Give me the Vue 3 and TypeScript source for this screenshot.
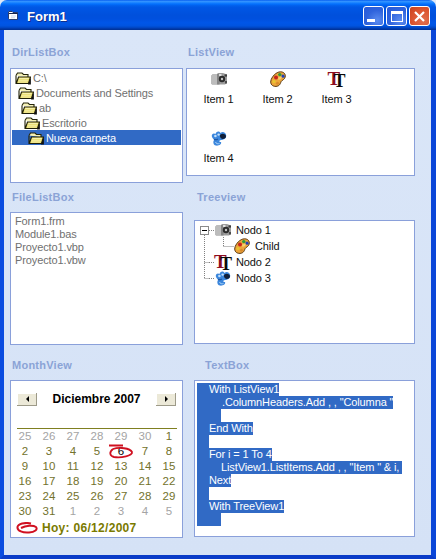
<script setup lang="ts">
interface Dir { name: string; indent: number; selected?: boolean }
interface Item { name: string; icon: string }
interface Day { n: number; out: boolean; today: boolean }

const dirs: Dir[] = [
  { name: 'C:\\', indent: 3 },
  { name: 'Documents and Settings', indent: 6 },
  { name: 'ab', indent: 9 },
  { name: 'Escritorio', indent: 12 },
  { name: 'Nueva carpeta', indent: 16, selected: true },
]
const files = ['Form1.frm', 'Module1.bas', 'Proyecto1.vbp', 'Proyecto1.vbw']
const items: Item[] = [
  { name: 'Item 1', icon: 'camera' },
  { name: 'Item 2', icon: 'palette' },
  { name: 'Item 3', icon: 'tt' },
  { name: 'Item 4', icon: 'paw' },
]
const nodes = [
  { name: 'Nodo 1', icon: 'camera', child: false },
  { name: 'Child', icon: 'palette', child: true },
  { name: 'Nodo 2', icon: 'tt', child: false },
  { name: 'Nodo 3', icon: 'paw', child: false },
]
const seq: [number, boolean][] = [
  [25, true], [26, true], [27, true], [28, true], [29, true], [30, true],
]
const days: Day[] = seq.map(([n, out]) => ({ n, out, today: false }))
for (let n = 1; n <= 31; n++) days.push({ n, out: false, today: n === 6 })
for (let n = 1; n <= 5; n++) days.push({ n, out: true, today: false })

const code = [
  { t: 'With ListView1', pad: 12 },
  { t: '.ColumnHeaders.Add , , "Columna "', pad: 25 },
  { t: '', pad: 24 },
  { t: 'End With', pad: 12 },
  { t: '', pad: 12 },
  { t: 'For i = 1 To 4', pad: 12 },
  { t: 'ListView1.ListItems.Add , , "Item " & i, i', pad: 24 },
  { t: 'Next', pad: 12 },
  { t: '', pad: 12 },
  { t: 'With TreeView1', pad: 12 },
  { t: '', pad: 24 },
]
</script>

<template>
  <svg class="defs" width="0" height="0" aria-hidden="true">
    <symbol id="ic-folder" viewBox="0 0 16 14">
      <path d="M1 4.5 L2.5 2 H7 L8.5 3.5 H13 V6" fill="#f6f2b8" stroke="#26260c" stroke-width="1.1" />
      <path d="M1 4.5 V12.5 H13.5 L15.5 6 H3.5 L1.5 12" fill="#e6d860" stroke="#1e1e08" stroke-width="1.1" />
      <path d="M4.2 7.4 H13.8 M3.6 9.2 H13.2 M3.1 11 H12.7" stroke="#fbf6c0" stroke-width="0.9" />
      <path d="M13 13.4 L15.9 6 V13.4 Z" fill="#111" />
    </symbol>
    <symbol id="ic-camera" viewBox="0 0 16 16">
      <path d="M0 5 L2 3 H6 L7 2 H12 L16 3.5 V12 L14 13.5 H1 L0 12 Z" fill="#9c9c9c" />
      <path d="M0 5 L2 3 H6 V13.5 H1 L0 12 Z" fill="#bcbcbc" />
      <path d="M6 3 H8.5 V13.5 H6 Z" fill="#858585" />
      <circle cx="11" cy="8" r="3.2" fill="#2c2c2c" />
      <circle cx="11" cy="8" r="1.2" fill="#c4c4c4" />
      <rect x="13.5" y="3.4" width="2.5" height="2.2" fill="#3c3c3c" />
      <rect x="8" y="3.2" width="2.5" height="1.6" fill="#f0f0f0" />
      <rect x="14" y="10" width="2" height="2.5" fill="#4c4c4c" />
    </symbol>
    <symbol id="ic-palette" viewBox="0 0 16 16">
      <path d="M10.5 0.8 C13.8 0.8 15.8 3 15.2 6 C14.7 8.5 12.2 9 11.2 10.5 C10.4 12 10 15.2 6 15.4 C2.3 15.6 0.2 13 0.8 10 C1.5 6 6 0.8 10.5 0.8 Z" fill="#eda63c" stroke="#4a2a08" stroke-width="0.9" />
      <circle cx="6" cy="6.5" r="2" fill="#c8241c" />
      <circle cx="9.8" cy="3.6" r="1.7" fill="#2f9a3a" />
      <circle cx="13" cy="5.2" r="1.6" fill="#2240b8" />
      <circle cx="4" cy="10.5" r="1.6" fill="#e8c830" />
      <path d="M8 6.5 L12 5.5 L11 8 L8.5 9 Z" fill="#f6d070" />
      <circle cx="7.5" cy="12.3" r="1.5" fill="#d88a2c" />
    </symbol>
    <symbol id="ic-paw" viewBox="0 0 16 16">
      <path d="M1 7 C0 4.5 2.5 2.5 4.5 4 C5 1.5 8 0.5 9.5 3 C11.5 1 15 2.5 15.2 5.5 C15.5 8.5 12.5 10 10 10 C8 10.3 7.5 12 10 12 C11 14 8 16 5 15.6 C2 15 1.8 11.5 3.2 9.8 C2.2 9 1.5 8 1 7 Z" fill="#3b86dc" />
      <circle cx="4.4" cy="6" r="1.3" fill="#c2dffa" />
      <circle cx="7.6" cy="4.6" r="1.2" fill="#c2dffa" />
      <path d="M9.5 4.5 C11.5 3 15 4 15 6.5 C15 8.8 11.5 9.5 10 8.3 C8.8 7.2 8.6 5.2 9.5 4.5 Z" fill="#101f3a" />
      <path d="M4.5 12 C5 13.8 7 14.2 8.5 13.4" fill="none" stroke="#a6d0f6" stroke-width="1" />
      <path d="M3 9.2 C4.5 10.2 5.5 9.6 7 9" fill="none" stroke="#1c56a4" stroke-width="1.1" />
    </symbol>
  </svg>

  <div class="window">
    <header class="titlebar">
      <svg class="app-icon" viewBox="0 0 10 9" width="10" height="9">
        <path d="M0.5 1 L1 0.5 H4 L5 1.5 H9.5 V8.5 H1.5 L0.5 7.5 Z" fill="#fff" stroke="#16234e" stroke-width="0.8" />
        <path d="M1 2.5 H9.5" stroke="#16234e" stroke-width="1.2" />
        <path d="M3 5 H8 M3 6.8 H7" stroke="#c7d3ea" stroke-width="0.9" />
      </svg>
      <span class="title">Form1</span>
      <div class="controls">
        <button class="ctl">
          <span class="min-glyph"></span>
        </button>
        <button class="ctl">
          <span class="max-glyph"></span>
        </button>
        <button class="ctl close">
          <svg viewBox="0 0 13 13" width="13" height="13">
            <path d="M2 2 L11 11 M11 2 L2 11" stroke="#fff" stroke-width="2.2" />
          </svg>
        </button>
      </div>
    </header>

    <main class="client">
      <section class="row row-1">
        <div class="panel left">
          <div class="label">DirListBox</div>
          <div class="box dir">
            <div
              v-for="d in dirs"
              :key="d.name"
              class="dir-row"
              :class="{ selected: d.selected }"
              :style="{ paddingLeft: d.indent + 'px' }"
            >
              <svg class="folder" width="16" height="14"><use href="#ic-folder" /></svg>
              <span>{{ d.name }}</span>
            </div>
          </div>
        </div>
        <div class="panel right-a">
          <div class="label">ListView</div>
          <div class="box listview">
            <div v-for="it in items" :key="it.name" class="lv-item">
              <span v-if="it.icon === 'tt'" class="tt"><i class="t1">T</i><i class="t2">T</i></span>
              <svg v-else class="ic" width="16" height="16"><use :href="'#ic-' + it.icon" /></svg>
              <span class="lv-text">{{ it.name }}</span>
            </div>
          </div>
        </div>
      </section>

      <section class="row row-2">
        <div class="panel left">
          <div class="label">FileListBox</div>
          <div class="box files">
            <div v-for="f in files" :key="f" class="file">{{ f }}</div>
          </div>
        </div>
        <div class="panel right-b">
          <div class="label tree-label">Treeview</div>
          <div class="box tree">
            <svg class="connectors" width="60" height="70">
              <path d="M9.5 14 V57.5 M14 9.5 H20 M14 41.5 H20 M14 57.5 H20 M9.5 41.5 H14 M9.5 57.5 H14 M28.5 16 V25.5 M28.5 25.5 H39" fill="none" stroke="#808080" stroke-width="1" stroke-dasharray="1 1" />
            </svg>
            <span class="expander"></span>
            <div v-for="n in nodes" :key="n.name" class="node" :class="{ child: n.child }">
              <span v-if="n.icon === 'tt'" class="tt"><i class="t1">T</i><i class="t2">T</i></span>
              <svg v-else class="ic" width="16" height="16"><use :href="'#ic-' + n.icon" /></svg>
              <span class="node-text">{{ n.name }}</span>
            </div>
          </div>
        </div>
      </section>

      <section class="row row-3">
        <div class="panel left">
          <div class="label">MonthView</div>
          <div class="box month">
            <div class="nav">
              <button class="navbtn"><span class="arrow-l"></span></button>
              <span class="month-title">Diciembre 2007</span>
              <button class="navbtn"><span class="arrow-r"></span></button>
            </div>
            <div class="rule"></div>
            <div class="days">
              <span
                v-for="(d, i) in days"
                :key="i"
                class="day"
                :class="{ out: d.out, today: d.today }"
              >
                {{ d.n }}
                <svg v-if="d.today" class="ring" viewBox="0 0 26 16" width="26" height="16">
                  <path d="M1 1.5 H15 M5 5 C11 3 22 4 24 8 C25 12 13 14 6 13 C1.5 12 1 8 5 5" fill="none" stroke="#d01020" stroke-width="1.8" />
                </svg>
              </span>
            </div>
            <div class="hoy">
              <svg viewBox="0 0 22 12" width="22" height="12">
                <path d="M15 1.5 C9 0 2 2 1.5 5 C1 9 7 11 13 10.5 C19 10 22 7.5 20 5 C17 3 10 3.5 5 6" fill="none" stroke="#d01020" stroke-width="2" />
              </svg>
              <span>Hoy: 06/12/2007</span>
            </div>
          </div>
        </div>
        <div class="panel right-b">
          <div class="label text-label">TextBox</div>
          <div class="box textbox">
            <div v-for="(l, i) in code" :key="i" class="code-line" :style="{ paddingLeft: l.pad + 'px' }">{{ l.t }}</div>
          </div>
        </div>
      </section>
    </main>
  </div>
</template>

<style>
html, body { margin: 0; background: #dfe8f8; }
</style>

<style scoped>
.defs { position: absolute; }
.window {
  width: 436px;
  height: 559px;
  display: flex;
  flex-direction: column;
  font-family: "Liberation Sans", Arial, sans-serif;
  font-size: 11px;
  letter-spacing: -0.12px;
  border-radius: 7px 7px 0 0;
  overflow: hidden;
}
.titlebar {
  height: 30px;
  flex: none;
  display: flex;
  align-items: center;
  padding: 2px 6px 0 8px;
  box-sizing: border-box;
  background: linear-gradient(180deg, #0058ee 0%, #3593ff 4%, #288eff 7%, #127dff 10%, #036ffc 14%, #0262ee 18%, #0057e5 24%, #0050dc 50%, #0050de 62%, #0056e8 76%, #0054e0 86%, #0046c4 92%, #0038a8 96%, #003092 100%);
}
.app-icon { flex: none; margin-top: -1px; }
.title {
  margin-left: 9px;
  margin-top: 1px;
  color: #fff;
  font-weight: 700;
  font-size: 13px;
  letter-spacing: 0;
  text-shadow: 1px 1px 0 #0f2f8c;
}
.controls { margin-left: auto; display: flex; gap: 2px; }
.ctl {
  width: 21px;
  height: 20px;
  padding: 0;
  border: 1px solid #fff;
  border-radius: 3px;
  box-sizing: border-box;
  position: relative;
  display: flex;
  align-items: center;
  justify-content: center;
  background: radial-gradient(circle at 70% 75%, #5b8cf0 0%, #2f63dc 55%, #2558d8 100%);
}
.ctl.close { background: radial-gradient(circle at 70% 75%, #e07050 0%, #dc5530 55%, #c8401c 100%); }
.min-glyph { width: 8px; height: 3px; background: #fff; margin: 8px 6px 0 0; }
.max-glyph { width: 12px; height: 11px; box-sizing: border-box; border: 1px solid #fff; border-top-width: 3px; }

.client {
  flex: 1;
  min-height: 0;
  background: linear-gradient(180deg, #dae6f8, #d5e2f6);
  border-left: 4px solid #0a4ce0;
  border-right: 5px solid #0a46d8;
  border-bottom: 4px solid #0a3cc8;
  padding-top: 14px;
}
.row { display: flex; align-items: flex-start; }
.row-2 { margin-top: 6px; }
.row-3 { margin-top: 12px; }
.panel.left { margin-left: 6px; width: 173px; flex: none; }
.right-a { margin-left: 3px; width: 229px; flex: none; }
.right-b { margin-left: 11px; width: 221px; flex: none; }
.label {
  height: 16px;
  line-height: 16px;
  margin-bottom: 8px;
  padding-left: 2px;
  color: #8ba3d6;
  font-weight: 700;
  font-size: 11px;
  letter-spacing: 0.25px;
}
.row-2 .label, .row-3 .label { margin-bottom: 7px; }
.row-2 .tree-label { margin-bottom: 15px; padding-left: 3px; }
.row-3 .text-label { padding-left: 11px; }
.box {
  box-sizing: border-box;
  border: 1px solid #8aa0da;
  background: #fff;
  position: relative;
  overflow: hidden;
}
.dir { height: 115px; padding: 1px 1px 0; color: #707070; }
.dir-row {
  height: 15px;
  display: flex;
  align-items: center;
  white-space: nowrap;
}
.dir-row.selected { background: #316ac5; color: #fff; }
.folder { flex: none; margin-right: 2px; }
.listview {
  height: 108px;
  padding: 2px 0 0 2px;
  display: grid;
  grid-template-columns: repeat(auto-fill, 59px);
  grid-auto-rows: 59px;
  align-content: start;
  color: #111;
}
.lv-item {
  display: flex;
  flex-direction: column;
  align-items: center;
}
.lv-text { margin-top: 5px; line-height: 14px; }
.ic { display: block; flex: none; width: 16px; height: 16px; }
.tt {
  position: relative;
  display: block;
  flex: none;
  width: 16px;
  height: 16px;
  font-family: "Liberation Serif", serif;
  font-weight: 700;
  line-height: 16px;
  letter-spacing: 0;
}
.tt i { position: absolute; font-style: normal; }
.t1 { left: -1px; top: 0; color: #8c0c20; font-size: 19px; }
.t2 { left: 5px; top: 2px; color: #0a0a0a; font-size: 18px; }

.files { height: 133px; padding: 2px 4px; color: #707070; }
.file { height: 13px; line-height: 13px; white-space: nowrap; }

.tree { height: 124px; padding-top: 1px; color: #111; }
.connectors { position: absolute; left: 0; top: 0; }
.expander {
  position: absolute;
  left: 5px;
  top: 5px;
  width: 9px;
  height: 9px;
  box-sizing: border-box;
  border: 1px solid #8a8a8a;
  background: linear-gradient(#000, #000) center / 5px 1px no-repeat, #fff;
}
.node {
  position: relative;
  height: 16px;
  display: flex;
  align-items: center;
  padding-left: 20px;
  white-space: nowrap;
}
.node.child { padding-left: 39px; }
.node-text { margin-left: 5px; }

.month { height: 158px; color: #72722c; }
.nav {
  display: flex;
  align-items: center;
  justify-content: space-between;
  margin: 11px 6px 0;
}
.navbtn {
  width: 20px;
  height: 13px;
  padding: 0;
  border: 0;
  background: #ece9d8;
  box-shadow: inset -1px -1px 0 #9d9a88, inset 1px 1px 0 #fff;
  display: flex;
  align-items: center;
  justify-content: center;
}
.arrow-l, .arrow-r { width: 0; height: 0; border: 3px solid transparent; }
.arrow-l { border-right: 3px solid #000; border-left: 0; }
.arrow-r { border-left: 3px solid #000; border-right: 0; }
.month-title { color: #000; font-weight: 700; font-size: 12px; letter-spacing: 0; }
.rule { height: 1px; background: #7f7f20; margin: 22px 5px 0 6px; }
.days {
  display: grid;
  grid-template-columns: repeat(7, 24px);
  grid-auto-rows: 15px;
  margin: 0 0 0 2px;
}
.day {
  position: relative;
  text-align: center;
  line-height: 15px;
  font-size: 11.5px;
  letter-spacing: 0;
}
.day.out { color: #a4a4a4; }
.day.today { color: #000; }
.ring { position: absolute; left: -1px; top: 0; }
.hoy {
  display: flex;
  align-items: center;
  gap: 4px;
  height: 16px;
  margin: 1px 0 0 5px;
  color: #7a7a00;
  font-weight: 700;
  font-size: 12px;
  letter-spacing: 0.3px;
}
.hoy svg { flex: none; }

.textbox { height: 157px; padding: 2px 0 0 2px; }
.code-line {
  width: fit-content;
  max-width: 205px;
  height: 13px;
  line-height: 13px;
  overflow: hidden;
  background: #316ac5;
  color: #fff;
  white-space: pre;
  box-sizing: border-box;
}
</style>
